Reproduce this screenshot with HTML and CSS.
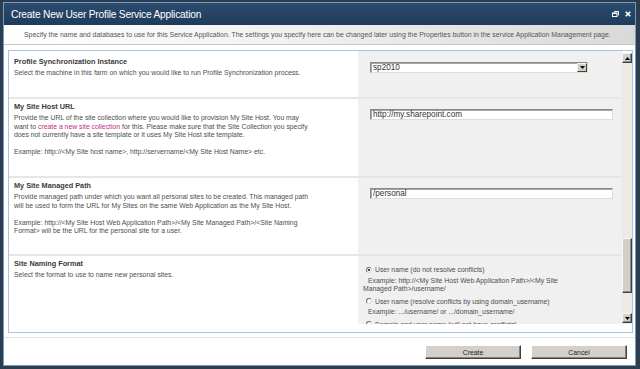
FILE: index.html
```html
<!DOCTYPE html>
<html>
<head>
<meta charset="utf-8">
<link rel="stylesheet" href="styles.css">
</head>
<body>
<div class="dialog">
  <div class="titlebar">
    <span class="title">Create New User Profile Service Application</span>
    <span class="controls">
      <svg width="7" height="6" viewBox="0 0 7 6"><path d="M2.5 1.5V0.5h4v3.5h-1" fill="none" stroke="#fff"/><rect x="0.5" y="2" width="4.5" height="3.5" fill="none" stroke="#fff"/><path d="M0.5 2.5h4.5" stroke="#fff"/></svg>
      <svg width="6" height="6" viewBox="0 0 6 6"><path d="M0.7 0.7l4.6 4.6M5.3 0.7l-4.6 4.6" stroke="#fff" stroke-width="1.6"/></svg>
    </span>
  </div>
  <div class="intro">Specify the name and databases to use for this Service Application. The settings you specify here can be changed later using the Properties button in the service Application Management page.</div>
  <div class="box">
    <div class="viewport">
      <div class="sections">
        <div class="section s1">
          <div class="label-col">
            <div class="heading">Profile Synchronization Instance</div>
            <div class="desc">Select the machine in this farm on which you would like to run Profile Synchronization process.</div>
          </div>
          <div class="field-col">
            <div class="select"><span class="field-text">sp2010</span><span class="select-btn"><svg width="5" height="3" viewBox="0 0 5 3"><path d="M0 0h5L2.5 3z"/></svg></span></div>
          </div>
        </div>
        <div class="section s2">
          <div class="label-col">
            <div class="heading">My Site Host URL</div>
            <div class="desc">Provide the URL of the site collection where you would like to provision My Site Host. You may<br>want to <a href="#">create a new site collection</a> for this. Please make sure that the Site Collection you specify<br>does not currently have a site template or it uses My Site Host site template.<br><br>Example: http://&lt;My Site host name&gt;, http://servername/&lt;My Site Host Name&gt; etc.</div>
          </div>
          <div class="field-col">
            <div class="textbox"><span class="field-text">http://my.sharepoint.com</span></div>
          </div>
        </div>
        <div class="section s3">
          <div class="label-col">
            <div class="heading">My Site Managed Path</div>
            <div class="desc">Provide managed path under which you want all personal sites to be created. This managed path<br>will be used to form the URL for My Sites on the same Web Application as the My Site Host.<br><br>Example: http://&lt;My Site Host Web Application Path&gt;/&lt;My Site Managed Path&gt;/&lt;Site Naming<br>Format&gt; will be the URL for the personal site for a user.</div>
          </div>
          <div class="field-col">
            <div class="textbox"><span class="field-text">/personal</span></div>
          </div>
        </div>
        <div class="section s4">
          <div class="label-col">
            <div class="heading">Site Naming Format</div>
            <div class="desc">Select the format to use to name new personal sites.</div>
          </div>
          <div class="field-col">
            <div class="option first"><span class="radio checked"></span>User name (do not resolve conflicts)</div>
            <div class="example">Example: http://&lt;My Site Host Web Application Path&gt;/&lt;My Site<br>Managed Path&gt;/username/</div>
            <div class="option"><span class="radio"></span>User name (resolve conflicts by using domain_username)</div>
            <div class="example">Example: .../username/ or .../domain_username/</div>
            <div class="option"><span class="radio"></span>Domain and user name (will not have conflicts)</div>
          </div>
        </div>
      </div>
      <div class="scrollbar">
        <div class="sb-btn"><svg width="5" height="3" viewBox="0 0 5 3"><path d="M0 3h5L2.5 0z"/></svg></div>
        <div class="sb-gap1"></div>
        <div class="sb-thumb"></div>
        <div class="sb-gap2"></div>
        <div class="sb-btn"><svg width="5" height="3" viewBox="0 0 5 3"><path d="M0 0h5L2.5 3z"/></svg></div>
      </div>
    </div>
  </div>
  <div class="footer">
    <button class="btn">Create</button>
    <button class="btn">Cancel</button>
  </div>
</div>
</body>
</html>
```
FILE: styles.css
```css
* { box-sizing: border-box; margin: 0; padding: 0; }
body {
  width: 640px; height: 369px; overflow: hidden;
  background: #2e3d4e;
  font-family: "Liberation Sans", Arial, sans-serif;
}
.dialog {
  margin: 2px 0 0 3px;
  width: 633px; height: 364px;
  border: 1px solid #6f9bc4;
  background: #fff;
  display: flex; flex-direction: column;
}
.titlebar {
  height: 22px; flex: none;
  display: flex; align-items: center; justify-content: space-between;
  padding: 0 4px 0 7px;
  background: linear-gradient(#2c4c6e, #1e3b5b);
  color: #fff;
}
.title { font-size: 10.2px; letter-spacing: -0.2px; }
.controls { display: flex; gap: 6px; align-items: center; }
.intro {
  height: 20px; flex: none;
  display: flex; align-items: center;
  padding-left: 20px;
  font-size: 6.9px; color: #555;
  white-space: nowrap;
  background: linear-gradient(to right, #ffffff, #f3f3f3 40%, #d9d9d9);
  border-bottom: 1px solid #c6c6c6;
}
.box {
  flex: none; height: 283px;
  margin: 5px 2px 0 4px;
  border: 1px solid #a9c4de;
  padding-bottom: 8px;
}
.viewport { height: 273px; display: flex; overflow: hidden; }
.sections { width: 613px; flex: none; }
.section {
  display: grid; grid-template-columns: 349px 264px;
  border-bottom: 2px solid #e6e6e6;
  overflow: hidden;
}
.s1 { height: 48px; }
.s2 { height: 79px; }
.s3 { height: 78px; }
.s4 { height: 120px; border-bottom: 0; }
.label-col { padding: 3px 0 0 5px; }
.s1 .label-col { padding-top: 6px; }
.field-col { background: #f0f0f0; padding: 10px 0 0 12px; }
.s1 .field-col { padding-top: 11px; }
.s4 .field-col { padding: 8px 0 0 5px; }
.heading { font-weight: bold; font-size: 7.3px; line-height: 9px; color: #3b3b3b; white-space: nowrap; }
.desc { margin-top: 3px; font-size: 6.85px; line-height: 8.5px; color: #4d4d4d; white-space: nowrap; }
.desc a { color: #c22b84; text-decoration: none; }
.select, .textbox {
  display: flex; height: 11px;
  background: #fff;
  border: 1px solid; border-color: #8a8a8a #dcdcdc #dcdcdc #8a8a8a;
  box-shadow: inset 1px 1px 0 #a6a6a6;
}
.select { width: 218px; }
.textbox { width: 243px; }
.field-text { flex: 1; font-size: 8.2px; line-height: 9px; padding-left: 2px; color: #333; white-space: nowrap; }
.select-btn {
  width: 10px; height: 9px; flex: none;
  background: #d4d0c8;
  border: 1px solid; border-color: #f4f4f4 #404040 #404040 #f4f4f4;
  display: flex; align-items: center; justify-content: center;
}
.option {
  display: flex; align-items: center; height: 11px; margin-top: 2px;
  font-size: 6.85px; color: #4d4d4d; white-space: nowrap;
}
.option.first { margin-top: 0; }
.radio {
  width: 6px; height: 6px; border-radius: 50%;
  background: #fff; flex: none;
  border: 1px solid; border-color: #707070 #dadada #dadada #707070;
  margin: 0 3px 0 3px;
  display: flex; align-items: center; justify-content: center;
}
.radio.checked::after { content: ""; width: 2px; height: 2px; border-radius: 50%; background: #000; }
.example {
  margin-top: 1.5px; font-size: 6.85px; line-height: 8.5px;
  text-indent: 5px; white-space: nowrap; color: #4d4d4d;
}
.scrollbar {
  width: 10px; flex: none; height: 271px; margin-top: 2px;
  background: #eceae4;
  display: flex; flex-direction: column;
}
.sb-btn, .sb-thumb {
  background: #d4d0c8;
  border: 1px solid; border-color: #f4f4f4 #404040 #404040 #f4f4f4;
  box-shadow: inset -1px -1px 0 #8a8a8a;
}
.sb-btn { height: 10px; flex: none; display: flex; align-items: center; justify-content: center; }
.sb-gap1 { height: 175px; flex: none; }
.sb-thumb { height: 55px; flex: none; }
.sb-gap2 { height: 20px; flex: none; }
.footer {
  flex: none; height: 28px; margin-top: 4px;
  border-top: 1px solid #e2e2e2;
  display: flex; justify-content: flex-end; gap: 10px;
  padding: 7px 8px 0 0;
}
.btn {
  width: 96px; height: 14px;
  background: #d4d0c8;
  border: 1px solid; border-color: #fff #404040 #404040 #fff;
  box-shadow: inset -1px -1px 0 #808080;
  font-family: "Liberation Sans", Arial, sans-serif;
  font-size: 6.85px; color: #222;
}
```
